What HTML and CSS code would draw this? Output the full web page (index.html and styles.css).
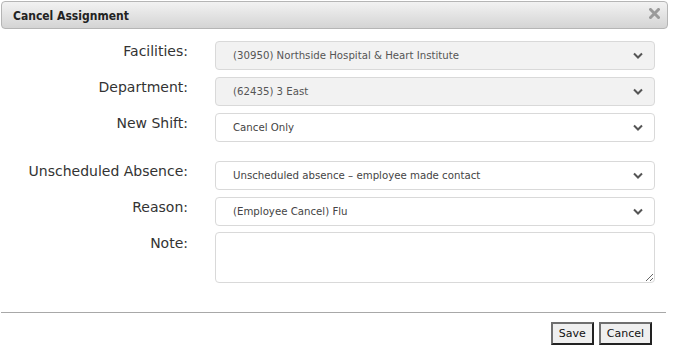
FILE: index.html
```html
<!DOCTYPE html>
<html>
<head>
<meta charset="utf-8">
<link rel="stylesheet" href="styles.css">
</head>
<body>
<div class="dialog">
  <div class="titlebar">
    <span class="title">Cancel Assignment</span>
    <span class="close" aria-label="close">
      <svg width="11" height="11" viewBox="0 0 11 11"><path d="M1.5 1.5 L9.5 9.5 M9.5 1.5 L1.5 9.5" stroke="#9a9a9a" stroke-width="3" stroke-linecap="square"/></svg>
    </span>
  </div>
  <form class="form">
    <label class="lbl">Facilities:</label>
    <div class="sel disabled"><span>(30950) Northside Hospital &amp; Heart Institute</span><svg class="chev" width="10" height="7" viewBox="0 0 10 7"><path d="M1 1.5 L5 5.5 L9 1.5" fill="none" stroke="#555" stroke-width="2"/></svg></div>

    <label class="lbl">Department:</label>
    <div class="sel disabled"><span>(62435) 3 East</span><svg class="chev" width="10" height="7" viewBox="0 0 10 7"><path d="M1 1.5 L5 5.5 L9 1.5" fill="none" stroke="#555" stroke-width="2"/></svg></div>

    <label class="lbl">New Shift:</label>
    <div class="sel"><span>Cancel Only</span><svg class="chev" width="10" height="7" viewBox="0 0 10 7"><path d="M1 1.5 L5 5.5 L9 1.5" fill="none" stroke="#555" stroke-width="2"/></svg></div>

    <div class="spacer"></div>

    <label class="lbl">Unscheduled Absence:</label>
    <div class="sel"><span>Unscheduled absence – employee made contact</span><svg class="chev" width="10" height="7" viewBox="0 0 10 7"><path d="M1 1.5 L5 5.5 L9 1.5" fill="none" stroke="#555" stroke-width="2"/></svg></div>

    <label class="lbl">Reason:</label>
    <div class="sel"><span>(Employee Cancel) Flu</span><svg class="chev" width="10" height="7" viewBox="0 0 10 7"><path d="M1 1.5 L5 5.5 L9 1.5" fill="none" stroke="#555" stroke-width="2"/></svg></div>

    <label class="lbl">Note:</label>
    <textarea class="note"></textarea>
  </form>
  <div class="footer">
    <button class="btn" type="button">Save</button>
    <button class="btn" type="button">Cancel</button>
  </div>
</div>
</body>
</html>
```
FILE: styles.css
```css
html, body {
  margin: 0;
  padding: 0;
  background: #fff;
}
body {
  font-family: "DejaVu Sans", Verdana, sans-serif;
  color: #333;
}
.dialog {
  width: 667px;
  margin-left: 1px;
  padding-top: 1px;
}
.titlebar {
  height: 26px;
  border: 1px solid #b5b5b5;
  border-radius: 4px;
  background: linear-gradient(#f2f2f2, #d4d4d4);
  display: flex;
  align-items: center;
  justify-content: space-between;
  padding: 0 7px 0 11px;
}
.title {
  font-family: "DejaVu Sans Condensed", "DejaVu Sans", sans-serif;
  font-weight: bold;
  font-size: 12px;
  color: #222;
  padding-top: 1px;
}
.close {
  display: flex;
  margin-top: -4px;
}
.form {
  display: grid;
  grid-template-columns: 187px 440px;
  column-gap: 27px;
  row-gap: 7px;
  margin-top: 12px;
}
.lbl {
  text-align: right;
  font-size: 14px;
  line-height: 17px;
  padding-top: 2px;
  color: #333;
  white-space: nowrap;
}
.sel {
  height: 27px;
  border: 1px solid #d9d9d9;
  border-radius: 4px;
  background: #fff;
  display: flex;
  align-items: center;
  justify-content: space-between;
  padding: 0 11px 0 17px;
  font-size: 10.2px;
  color: #444;
}
.sel.disabled {
  background: #f2f2f2;
  color: #555;
}
.spacer {
  grid-column: 1 / span 2;
  height: 5px;
}
.note {
  height: 49px;
  border: 1px solid #d9d9d9;
  border-radius: 4px;
  margin: -1px 0 0 0;
  padding: 0;
  box-sizing: content-box;
  width: 438px;
  resize: both;
  font-family: inherit;
}
.footer {
  margin-top: 29px;
  border-top: 1px solid #a8a8a8;
  width: 665px;
  display: flex;
  justify-content: flex-end;
  gap: 5px;
  padding: 9px 14px 0 0;
  box-sizing: border-box;
}
.btn {
  font-family: "DejaVu Sans", Verdana, sans-serif;
  font-size: 11px;
  color: #111;
  background: #efefef;
  border: 2px solid;
  border-color: #6f6f6f #222 #222 #6f6f6f;
  padding: 0 6px;
  height: 23px;
  margin: 0;
}
```
